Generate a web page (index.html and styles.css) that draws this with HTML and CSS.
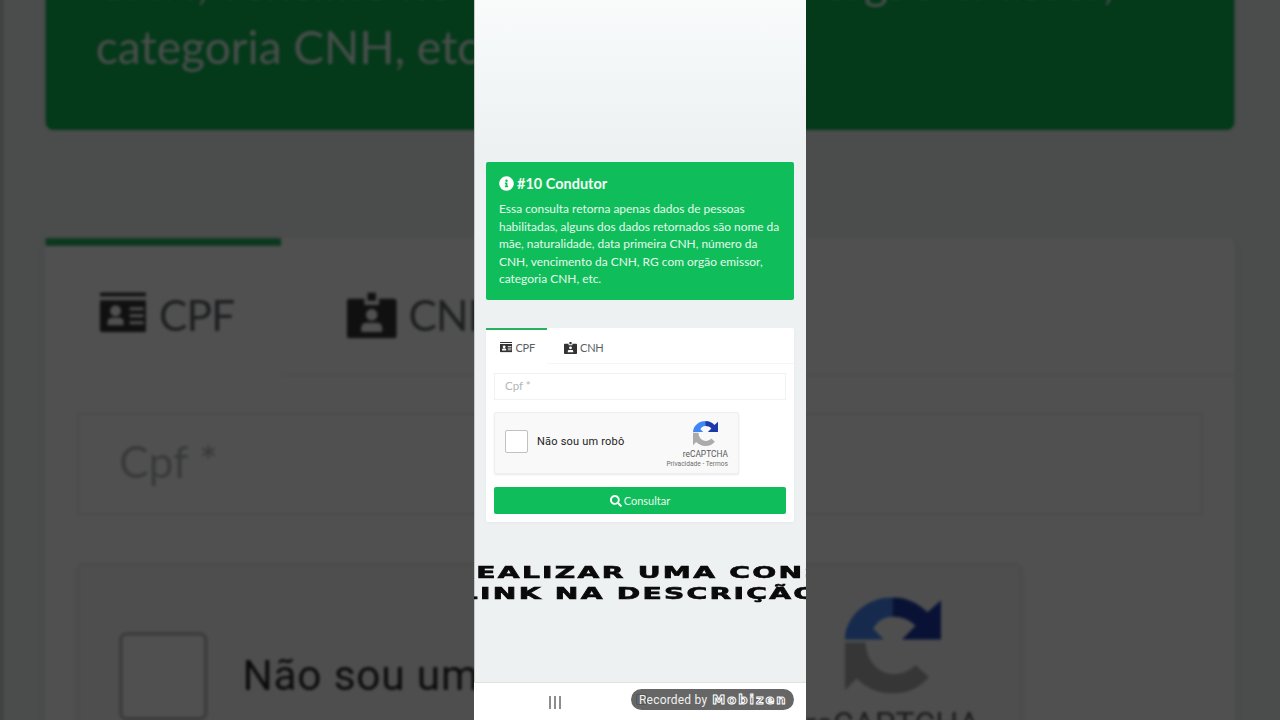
FILE: index.html
```html
<!DOCTYPE html>
<html lang="pt-BR">
<head>
<meta charset="utf-8">
<title>#10 Condutor</title>
<link rel="stylesheet" href="styles.css">
</head>
<body>
<svg class="defs" width="0" height="0" aria-hidden="true">
  <symbol id="i-info" viewBox="0 0 512 512"><path d="M256 8C119.043 8 8 119.083 8 256c0 136.997 111.043 248 248 248s248-111.003 248-248C504 119.083 392.957 8 256 8zm0 110c23.196 0 42 18.804 42 42s-18.804 42-42 42-42-18.804-42-42 18.804-42 42-42zm56 254c0 6.627-5.373 12-12 12h-88c-6.627 0-12-5.373-12-12v-24c0-6.627 5.373-12 12-12h12v-64h-12c-6.627 0-12-5.373-12-12v-24c0-6.627 5.373-12 12-12h64c6.627 0 12 5.373 12 12v100h12c6.627 0 12 5.373 12 12v24z"/></symbol>
  <symbol id="i-search" viewBox="0 0 512 512"><path d="M505 442.7L405.3 343c-4.5-4.5-10.6-7-17-7H372c27.6-35.3 44-79.7 44-128C416 93.1 322.9 0 208 0S0 93.1 0 208s93.1 208 208 208c48.3 0 92.7-16.4 128-44v16.3c0 6.4 2.5 12.5 7 17l99.7 99.7c9.4 9.4 24.6 9.4 33.9 0l28.3-28.3c9.4-9.4 9.4-24.6.1-34zM208 336c-70.7 0-128-57.2-128-128 0-70.7 57.2-128 128-128 70.7 0 128 57.2 128 128 0 70.7-57.2 128-128 128z"/></symbol>
  <symbol id="i-card" viewBox="0 0 49 40"><path fill-rule="evenodd" d="M3 0h43a3 3 0 0 1 3 3v1H0V3a3 3 0 0 1 3-3zM0 8h49v29a3 3 0 0 1-3 3H3a3 3 0 0 1-3-3zM16 13a5.500 5.500 0 1 0 0 11 5.500 5.500 0 0 0 0-11zM8 33h16v-3.500c0-2.500-2-4-5-4h-6c-3 0-5 1.500-5 4zM30 15v3h14v-3zM30 22v3h14v-3zM30 29v3h14v-3z"/></symbol>
  <symbol id="i-badge" viewBox="0 0 48 44"><path fill-rule="evenodd" d="M20 0h8v8h-8zM3 6h14v6h14V6h14a3 3 0 0 1 3 3v32a3 3 0 0 1-3 3H3a3 3 0 0 1-3-3V9a3 3 0 0 1 3-3zM24 16a5.500 5.500 0 1 0 0 11 5.500 5.500 0 0 0 0-11zM14 38h20v-4c0-3-2-5-5-5H19c-3 0-5 2-5 5z"/></symbol>
  <symbol id="i-recaptcha" viewBox="0 0 64 64">
    <path fill="#1c3aa9" d="M32 0C41 0 49 4 55 10L64 2V28H38L47 19C43 15 38 13 32 13L29 7Z"/>
    <path fill="#4285f4" d="M32 0V13C25 13 21 17 19 21L26 28H0C1 12 15 0 32 0Z"/>
    <path fill="#ababab" d="M0 30H14C14 41 22 51 33 51C38 51 43 49 47 45L56 53C50 60 42 64 32 64C22 64 14 60 8 54L0 62Z"/>
  </symbol>
</svg>

<main class="stage">
  <div class="backdrop" aria-hidden="true">
    <div class="phone phone-zoomed">
      <div class="content">
        <section class="alert">
          <h2 class="alert-title"><svg class="icon-info"><use href="#i-info"/></svg>#10 Condutor</h2>
          <p class="alert-text">Essa consulta retorna apenas dados de pessoas habilitadas, alguns dos dados retornados são nome da mãe, naturalidade, data primeira CNH, número da CNH, vencimento da CNH, RG com orgão emissor, categoria CNH, etc.</p>
        </section>
        <section class="card">
          <div class="tabs">
            <div class="tab tab-active"><svg class="icon-card"><use href="#i-card"/></svg>CPF</div>
            <div class="tab"><svg class="icon-badge"><use href="#i-badge"/></svg>CNH</div>
          </div>
          <div class="form">
            <div class="input">Cpf *</div>
            <div class="captcha">
              <span class="captcha-box"></span>
              <span class="captcha-label">Não sou um robô</span>
              <div class="captcha-brand">
                <svg class="captcha-logo"><use href="#i-recaptcha"/></svg>
                <span class="captcha-name">reCAPTCHA</span>
                <span class="captcha-links">Privacidade - Termos</span>
              </div>
            </div>
            <div class="button"><svg class="icon-search"><use href="#i-search"/></svg>Consultar</div>
          </div>
        </section>
      </div>
    </div>
  </div>

  <div class="phone phone-main">
    <div class="content">
      <section class="alert">
        <h2 class="alert-title"><svg class="icon-info"><use href="#i-info"/></svg>#10 Condutor</h2>
        <p class="alert-text">Essa consulta retorna apenas dados de pessoas habilitadas, alguns dos dados retornados são nome da mãe, naturalidade, data primeira CNH, número da CNH, vencimento da CNH, RG com orgão emissor, categoria CNH, etc.</p>
      </section>
      <section class="card">
        <div class="tabs">
          <div class="tab tab-active"><svg class="icon-card"><use href="#i-card"/></svg>CPF</div>
          <div class="tab"><svg class="icon-badge"><use href="#i-badge"/></svg>CNH</div>
        </div>
        <div class="form">
          <div class="input">Cpf *</div>
          <div class="captcha">
            <span class="captcha-box"></span>
            <span class="captcha-label">Não sou um robô</span>
            <div class="captcha-brand">
              <svg class="captcha-logo"><use href="#i-recaptcha"/></svg>
              <span class="captcha-name">reCAPTCHA</span>
              <span class="captcha-links">Privacidade - Termos</span>
            </div>
          </div>
          <div class="button"><svg class="icon-search"><use href="#i-search"/></svg>Consultar</div>
        </div>
      </section>
      <div class="caption">
        <div class="caption-line"><span class="caption-text">REALIZAR UMA CONS</span></div>
        <div class="caption-line"><span class="caption-text">LINK NA DESCRIÇÃO</span></div>
      </div>
    </div>
    <nav class="navbar">
      <div class="nav-menu"><i></i><i></i><i></i></div>
      <div class="recorder">
        <span class="recorder-dot"></span>
        <span class="recorder-text">Recorded by</span>
        <span class="recorder-brand">Mobizen</span>
      </div>
    </nav>
  </div>
</main>
</body>
</html>
```

FILE: styles.css
```css
* { box-sizing: border-box; }

html, body {
  margin: 0;
  height: 720px;
  overflow: hidden;
  background: #4c4c4c;
}

.defs { position: absolute; }

.stage {
  position: relative;
  width: 1280px;
  height: 720px;
  display: flex;
  justify-content: center;
  overflow: hidden;
}

.backdrop {
  position: absolute;
  inset: 0;
  display: flex;
  justify-content: center;
  overflow: hidden;
}

.phone {
  width: 332px;
  height: 720px;
  display: flex;
  flex-direction: column;
  background: linear-gradient(#f9fbfb 0, #edf1f2 150px);
  box-shadow: inset 1px 0 #c4c8c8;
  font-family: Lato, "Open Sans", sans-serif;
}

.phone-main { position: relative; }

.phone-zoomed {
  flex: none;
  transform: scale(3.86);
  transform-origin: 50% 359.4px;
  filter: blur(.4px) brightness(.315);
}

.phone-zoomed .alert { background: #0cb452; }

.content {
  flex: 1;
  padding: 162px 12px 0;
  display: flex;
  flex-direction: column;
  min-height: 0;
}

.alert {
  height: 138px;
  padding: 12px 10px 12px 13px;
  background: #0fbe5a;
  border-radius: 2px;
  color: #e6f8ee;
}

.alert-title {
  margin: 0;
  height: 19px;
  display: flex;
  align-items: center;
  font-size: 14.500px;
  font-weight: 700;
  line-height: 19px;
  color: #f4fcf7;
}

.icon-info {
  width: 15px;
  height: 15px;
  margin-right: 3px;
  fill: #fff;
}

.alert-text {
  margin: 7px 0 0;
  font-size: 11.950px;
  line-height: 17.500px;
}

.card {
  height: 194px;
  margin-top: 28px;
  background: #fff;
  border-radius: 2px;
  box-shadow: 0 1px 3px rgba(0, 0, 0, .04);
}

.tabs {
  display: flex;
  height: 36px;
  border-bottom: 1px solid #f4f6f6;
}

.tab {
  display: flex;
  align-items: center;
  height: 36px;
  padding: 3px 0 0 13.700px;
  color: #5b5f62;
  font-size: 11px;
  letter-spacing: -.2px;
  width: 63px;
}

.tab-active {
  width: 61px;
  background: #fff;
  border-top: 2px solid #26b163;
  padding-top: 1px;
}

.tab + .tab { padding-left: 17px; width: 80px; }

.icon-card {
  width: 12.700px;
  height: 10.400px;
  margin-right: 3px;
  fill: #333;
}

.icon-badge {
  width: 13px;
  height: 12px;
  margin-right: 3px;
  fill: #333;
}

.form {
  padding: 8.500px 8px 0;
}

.input {
  height: 27.500px;
  padding: 0 0 2px 10px;
  display: flex;
  align-items: center;
  border: 1px solid #f1f3f3;
  background: #fff;
  color: #b3b6b8;
  font-size: 11.500px;
}

.captcha {
  width: 245px;
  height: 62px;
  margin-top: 11.500px;
  padding: 0 0 2px 10px;
  display: flex;
  align-items: center;
  background: #f9f9f9;
  border: 1px solid #efefef;
  border-radius: 2px;
  box-shadow: 0 1px 2px rgba(0, 0, 0, .09);
  font-family: Roboto, "Liberation Sans", sans-serif;
}

.captcha-box {
  flex: none;
  width: 23px;
  height: 23px;
  background: #fff;
  border: 1px solid #c1c1c1;
  border-radius: 2px;
}

.captcha-label {
  margin-left: 9px;
  font-size: 11px;
  letter-spacing: .2px;
  color: #222;
}

.captcha-brand {
  margin: 6px 10px 0 auto;
  display: flex;
  flex-direction: column;
  align-items: flex-end;
  color: #666;
}

.captcha-logo {
  width: 25px;
  height: 25px;
  margin: 0 10px 3px 0;
}

.captcha-name {
  font-size: 8.400px;
  line-height: 10px;
  color: #5a5a5a;
}

.captcha-links {
  font-size: 6.600px;
  line-height: 9px;
  margin-top: 1px;
  white-space: nowrap;
  color: #6d6d6d;
}

.button {
  height: 27px;
  margin-top: 13.500px;
  display: flex;
  align-items: center;
  justify-content: center;
  background: #0fbe5a;
  border-radius: 2px;
  color: #e6f8ee;
  font-size: 11px;
}

.icon-search {
  width: 12px;
  height: 12px;
  margin-right: 2px;
  fill: #fff;
}

.caption {
  margin: 42px -12px 0;
  overflow: hidden;
  display: flex;
  flex-direction: column;
  gap: 2px;
}

.caption-line {
  display: flex;
  justify-content: center;
  white-space: nowrap;
  height: 19px;
}

.caption-text {
  flex: none;
  transform: scaleX(1.88);
  font-family: "DejaVu Sans", sans-serif;
  font-size: 15px;
  line-height: 19px;
  font-weight: 700;
  letter-spacing: 1.2px;
  color: #0a0a0a;
  -webkit-text-stroke: .6px #0a0a0a;
}

.navbar {
  height: 38px;
  flex: none;
  position: relative;
  background: #fff;
  border-top: 1px solid #dfe2e3;
  display: flex;
  align-items: center;
}

.nav-menu {
  margin-left: 75px;
  margin-top: 1px;
  display: flex;
  gap: 3px;
}

.nav-menu i {
  display: block;
  width: 2px;
  height: 13px;
  background: #8d8d8d;
}

.recorder {
  position: absolute;
  left: 157px;
  top: 6px;
  width: 163px;
  height: 21px;
  border-radius: 11px;
  background: #666;
  display: flex;
  align-items: center;
  padding-left: 8px;
  color: #f0f0f0;
  font-family: Roboto, "Liberation Sans", sans-serif;
}

.recorder-dot {
  position: absolute;
  left: 5px;
  top: 5px;
  width: 11px;
  height: 11px;
  border: 1px solid #555;
  border-radius: 2px;
}

.recorder-text {
  font-size: 12px;
  letter-spacing: .2px;
}

.recorder-brand {
  margin-left: 5px;
  font-family: "DejaVu Sans", sans-serif;
  font-size: 13px;
  font-weight: 700;
  letter-spacing: 2px;
  color: #666;
  -webkit-text-stroke: 1px #fff;
}
```
